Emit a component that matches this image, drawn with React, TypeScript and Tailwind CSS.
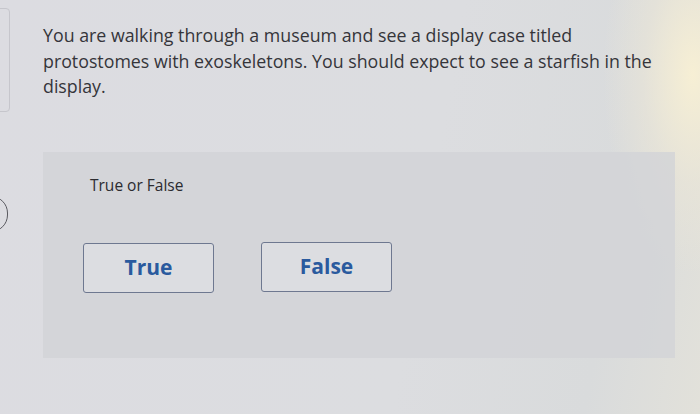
export default function App() {
  return (
    <div className="relative flex h-[414px] w-[700px] overflow-hidden bg-[radial-gradient(ellipse_90px_200px_at_99%_18%,rgba(248,240,212,0.95),rgba(238,232,214,0.5)_55%,transparent_100%),linear-gradient(100deg,#dcdce1_0%,#dcdde0_60%,#d9dbdc_85%,#e2e1da_100%)] font-['Open_Sans',sans-serif] text-[#2b2b2e]">
      {/* cut-off left column */}
      <div className="flex w-[12px] shrink-0 flex-col">
        <div className="ml-[-10px] mt-[8px] h-[104px] w-[20px] rounded-[4px] border border-[#c6c6cc]" />
        <div className="ml-[-26px] mt-[84px] h-[36px] w-[34px] rounded-full border border-[#5a5a60]" />
      </div>

      <div className="flex flex-1 flex-col pl-[31px] pt-[23px]">
        <p className="w-[618px] text-[17.8px] leading-[25.5px] text-[#35353a]">
          You are walking through a museum and see a display case titled protostomes with exoskeletons. You should expect to see a starfish in the display.
        </p>

        <div className="mt-[52px] flex h-[206px] w-[632px] flex-col bg-[#d2d3d7]/80 pl-[47px] pt-[22px]">
          <div className="text-[15.5px] text-[#2b2b30]">True or False</div>
          <div className="mt-[46px] flex gap-[47px]">
            <button className="ml-[-7px] flex h-[50px] w-[131px] items-center justify-center rounded-[3px] border border-[#6e7890] bg-[#dcdde1] text-[21px] font-bold text-[#2a5a9e]">
              True
            </button>
            <button className="mt-[-1px] flex h-[50px] w-[131px] items-center justify-center rounded-[3px] border border-[#6e7890] bg-[#dcdde1] text-[21px] font-bold text-[#2a5a9e]">
              False
            </button>
          </div>
        </div>
      </div>
    </div>
  );
}
